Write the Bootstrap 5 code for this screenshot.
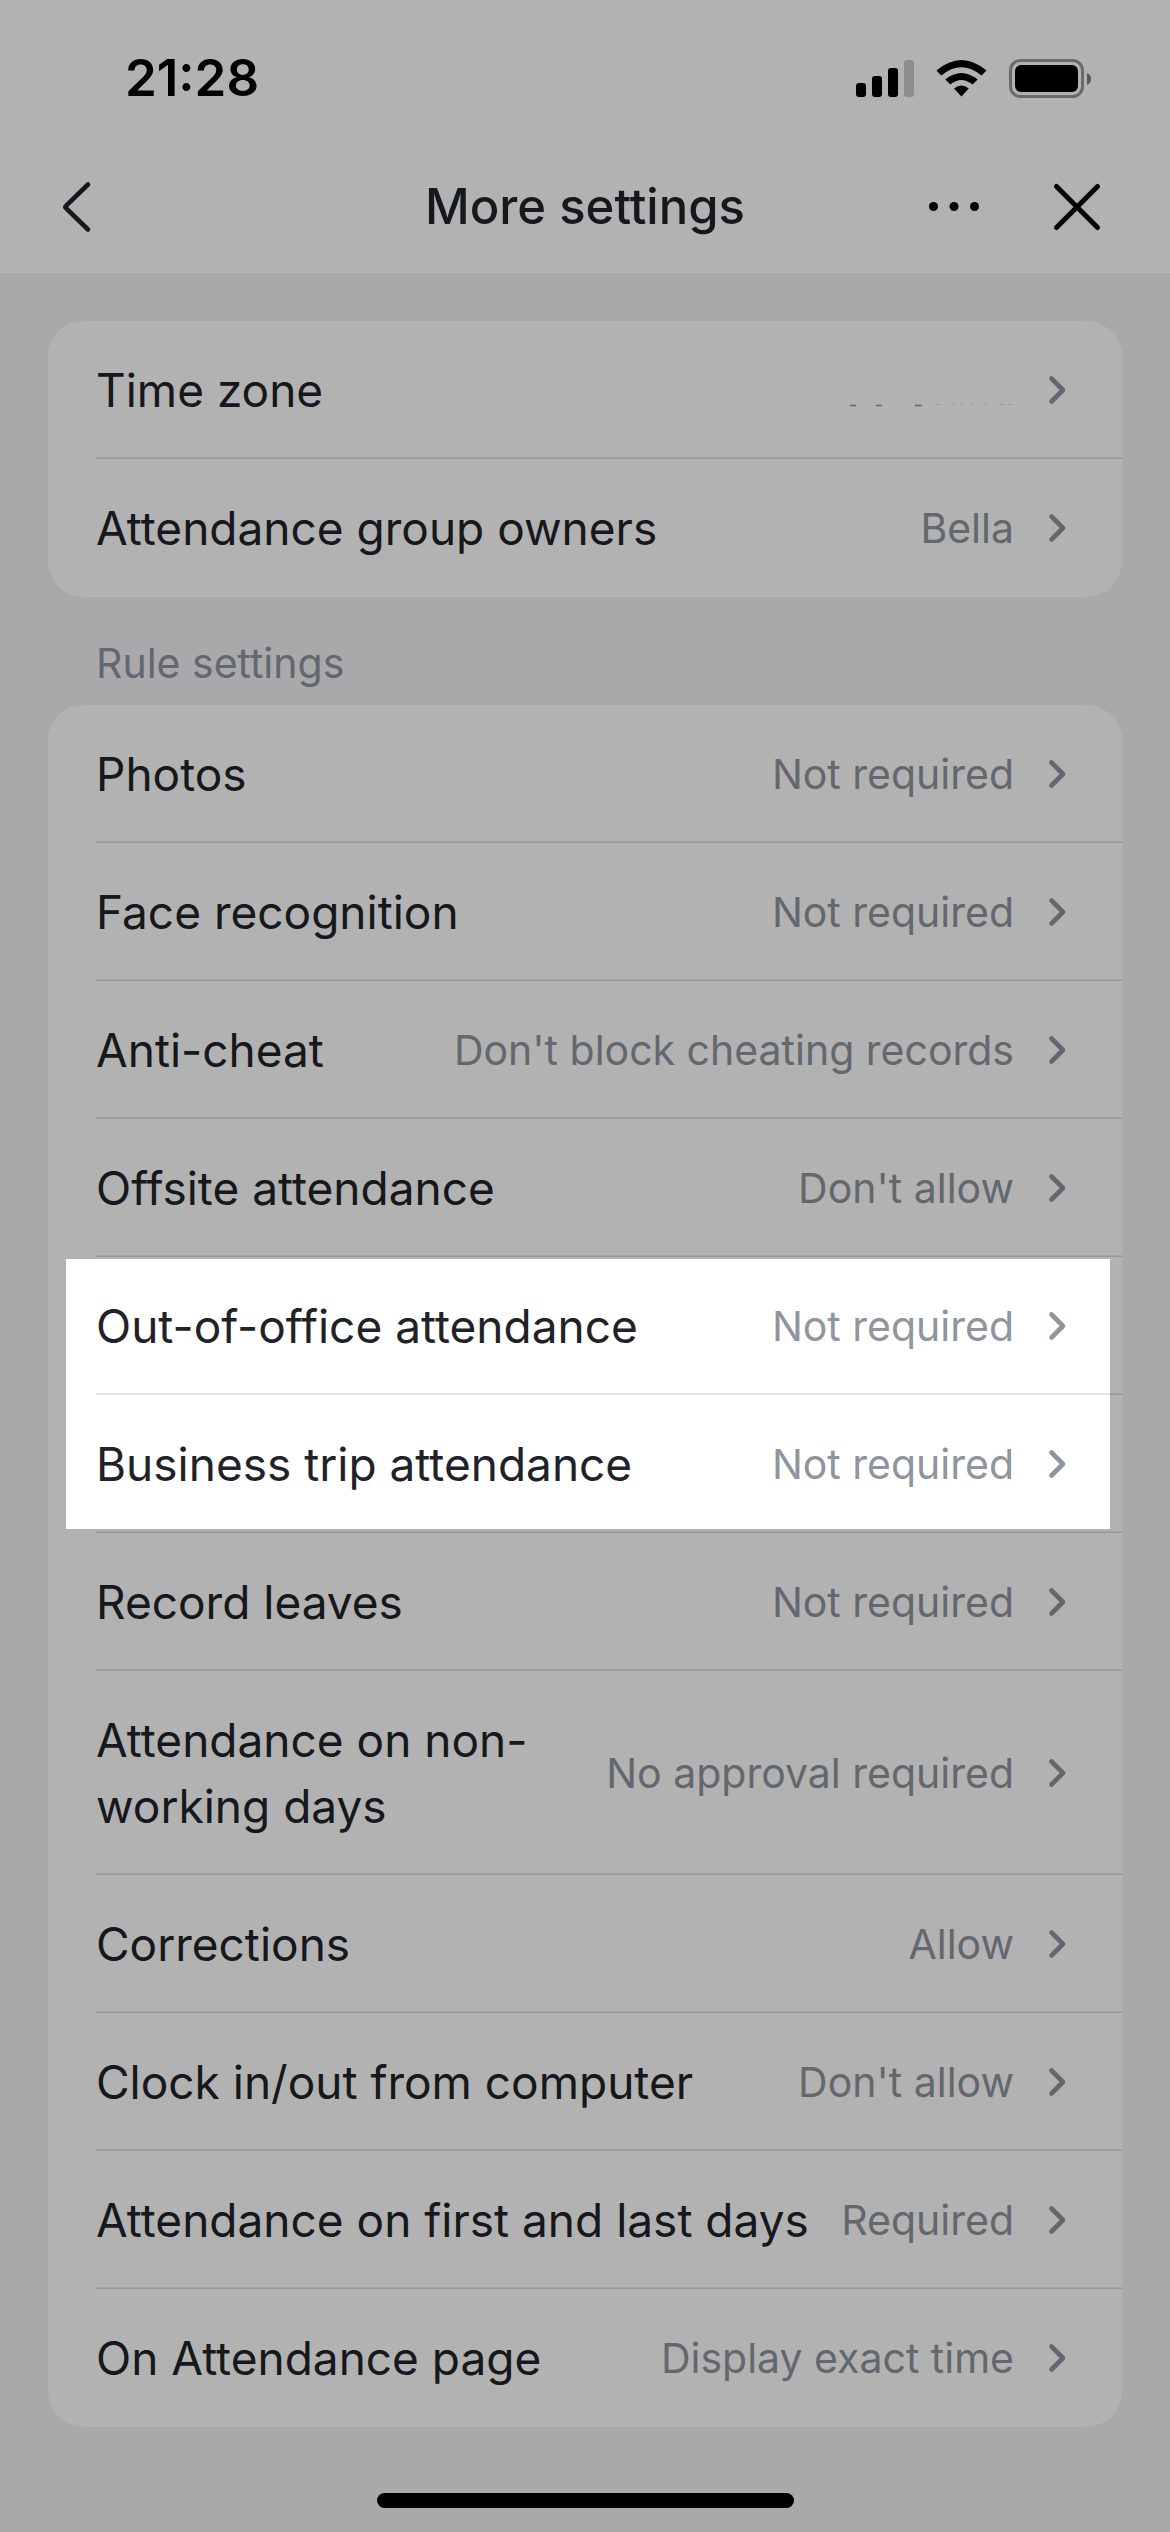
<!DOCTYPE html>
<html lang="en">
<head>
<meta charset="utf-8">
<meta name="viewport" content="width=device-width, initial-scale=1">
<title>More settings</title>
<link rel="stylesheet" href="https://cdn.jsdelivr.net/npm/bootstrap@5.3.0/dist/css/bootstrap.min.css">
<style>
  body { font-family: Inter, "Liberation Sans", sans-serif; background: #f2f3f5; color: #1f2329; overflow-x: hidden; }
  .status-bar { padding: 45px 78px 0 125px; }
  .clock { font-size: 51px; line-height: 66px; font-weight: 600; color: #000; }
  .nav-row { display: grid; grid-template-columns: 1fr auto 1fr; padding: 54px 48px 24px; }
  .nav-title { font-size: 49px; line-height: 84px; font-weight: 500; }
  .icon-btn { border: 0; background: none; padding: 0; color: #000; line-height: 0; }
  .nav-actions { gap: 54px; }
  .settings { padding: 48px 48px 66px; }
  .group-card { background: #fff; border-radius: 36px; padding-left: 48px; }
  .group-title { font-size: 41px; line-height: 60px; font-weight: 400; color: #8f959e; padding: 36px 48px 12px; }
  .setting { padding: 36px 48px 35px 0; border-bottom: 1px solid #dadada; box-shadow: inset 0 -1px #ebebeb; gap: 24px; color: inherit; }
  .setting.final { padding-bottom: 36px; border-bottom: 0; box-shadow: none; }
  .setting-name { font-size: 46px; line-height: 66px; }
  .setting-value { font-size: 41px; line-height: 60px; color: #8f959e; }
  .two-line { max-width: 460px; }
  .chevron { width: 36px; height: 36px; }
  .spotlight::after { content: ""; position: absolute; inset: 2px 12px 4px -30px; box-shadow: 0 0 0 4000px rgba(0,0,0,.3); pointer-events: none; z-index: 10; }
  .home-bar { width: 417px; height: 15px; border-radius: 8px; background: #000; margin-bottom: 24px; }
</style>
</head>
<body>
<svg class="d-none"><symbol id="chev" viewBox="0 0 36 36"><path d="M13.5 6.5L25 18L13.5 29.500" fill="none" stroke="#8f959e" stroke-width="4.600" stroke-linecap="round" stroke-linejoin="round"/></symbol></svg>
<header class="bg-white">
  <div class="status-bar d-flex justify-content-between align-items-center">
    <div class="clock">21:28</div>
    <svg width="236" height="40" viewBox="0 0 236 40" role="img" aria-label="Signal, Wi-Fi and battery">
      <rect x="0" y="25" width="10" height="14" rx="3"/><rect x="16" y="18" width="10" height="21" rx="3"/><rect x="32" y="10" width="10" height="29" rx="3"/><rect x="48" y="2" width="10" height="37" rx="3" fill-opacity=".2"/>
      <path d="M80.500 12.500Q105.300 -8.500 130.500 12.500L125.500 17.500Q105.300 1 85.300 17.500Z"/>
      <path d="M89.300 21.500Q105.300 8.500 121.700 21.500L116.500 26.500Q105.300 17.500 94.300 26.500Z"/>
      <path d="M98 30.500Q105.300 24.500 112.800 30.500L105.400 38.500Z"/>
      <rect x="154.500" y="2.500" width="72" height="36" rx="10" fill="none" stroke="#000" stroke-opacity=".4" stroke-width="3"/>
      <rect x="159" y="7" width="63" height="27" rx="6"/>
      <path d="M231 15q4 1.500 4 6t-4 6z" fill-opacity=".5"/>
    </svg>
  </div>
  <nav class="nav-row align-items-center" aria-label="Page">
    <button class="icon-btn text-start" type="button" aria-label="Back"><svg width="54" height="54" viewBox="0 0 54 54"><path d="M40 4.500L18 25.800Q16.800 27 18 28.200L40 49.500" fill="none" stroke="#1f2329" stroke-width="4.600" stroke-linecap="round" stroke-linejoin="round"/></svg></button>
    <h1 class="nav-title m-0">More settings</h1>
    <div class="nav-actions d-flex justify-content-end">
      <button class="icon-btn" type="button" aria-label="More"><svg width="60" height="54" viewBox="0 0 60 54"><circle cx="9.500" cy="26.500" r="4.500"/><circle cx="30" cy="26.500" r="4.500"/><circle cx="50.500" cy="26.500" r="4.500"/></svg></button>
      <button class="icon-btn" type="button" aria-label="Close"><svg width="84" height="54" viewBox="0 0 84 54"><path d="M18.500 6.500l41 41m0-41l-41 41" fill="none" stroke="#000" stroke-width="5" stroke-linecap="round"/></svg></button>
    </div>
  </nav>
</header>
<main class="settings">
  <section class="group-card">
    <a href="#" class="setting d-flex align-items-center text-decoration-none"><span class="setting-name me-auto">Time zone</span><svg width="174" height="36" viewBox="0 0 174 36" fill="none" stroke="#8f959e" aria-hidden="true"><path d="M10 33.500h6m20 0h6m33 0h7" stroke-width="1.500"/><path d="M96 32.500h4m11 0h3m7 0h3m7 0h3m11 0h3m11 0h6m3 0h4" stroke-opacity=".3"/></svg><svg class="chevron flex-shrink-0"><use href="#chev"/></svg></a>
    <a href="#" class="setting final d-flex align-items-center text-decoration-none"><span class="setting-name me-auto">Attendance group owners</span><span class="setting-value">Bella</span><svg class="chevron flex-shrink-0"><use href="#chev"/></svg></a>
  </section>
  <h2 class="group-title m-0">Rule settings</h2>
  <section class="group-card">
    <a href="#" class="setting d-flex align-items-center text-decoration-none"><span class="setting-name me-auto">Photos</span><span class="setting-value">Not required</span><svg class="chevron flex-shrink-0"><use href="#chev"/></svg></a>
    <a href="#" class="setting d-flex align-items-center text-decoration-none"><span class="setting-name me-auto">Face recognition</span><span class="setting-value">Not required</span><svg class="chevron flex-shrink-0"><use href="#chev"/></svg></a>
    <a href="#" class="setting d-flex align-items-center text-decoration-none"><span class="setting-name me-auto">Anti-cheat</span><span class="setting-value">Don't block cheating records</span><svg class="chevron flex-shrink-0"><use href="#chev"/></svg></a>
    <a href="#" class="setting d-flex align-items-center text-decoration-none"><span class="setting-name me-auto">Offsite attendance</span><span class="setting-value">Don't allow</span><svg class="chevron flex-shrink-0"><use href="#chev"/></svg></a>
    <div class="spotlight position-relative">
      <a href="#" class="setting d-flex align-items-center text-decoration-none"><span class="setting-name me-auto">Out-of-office attendance</span><span class="setting-value">Not required</span><svg class="chevron flex-shrink-0"><use href="#chev"/></svg></a>
      <a href="#" class="setting d-flex align-items-center text-decoration-none"><span class="setting-name me-auto">Business trip attendance</span><span class="setting-value">Not required</span><svg class="chevron flex-shrink-0"><use href="#chev"/></svg></a>
    </div>
    <a href="#" class="setting d-flex align-items-center text-decoration-none"><span class="setting-name me-auto">Record leaves</span><span class="setting-value">Not required</span><svg class="chevron flex-shrink-0"><use href="#chev"/></svg></a>
    <a href="#" class="setting d-flex align-items-center text-decoration-none"><span class="setting-name two-line me-auto">Attendance on non-working days</span><span class="setting-value">No approval required</span><svg class="chevron flex-shrink-0"><use href="#chev"/></svg></a>
    <a href="#" class="setting d-flex align-items-center text-decoration-none"><span class="setting-name me-auto">Corrections</span><span class="setting-value">Allow</span><svg class="chevron flex-shrink-0"><use href="#chev"/></svg></a>
    <a href="#" class="setting d-flex align-items-center text-decoration-none"><span class="setting-name me-auto">Clock in/out from computer</span><span class="setting-value">Don't allow</span><svg class="chevron flex-shrink-0"><use href="#chev"/></svg></a>
    <a href="#" class="setting d-flex align-items-center text-decoration-none"><span class="setting-name me-auto">Attendance on first and last days</span><span class="setting-value">Required</span><svg class="chevron flex-shrink-0"><use href="#chev"/></svg></a>
    <a href="#" class="setting final d-flex align-items-center text-decoration-none"><span class="setting-name me-auto">On Attendance page</span><span class="setting-value">Display exact time</span><svg class="chevron flex-shrink-0"><use href="#chev"/></svg></a>
  </section>
</main>
<footer class="d-flex justify-content-center"><div class="home-bar"></div></footer>
<script src="https://cdn.jsdelivr.net/npm/bootstrap@5.3.0/dist/js/bootstrap.bundle.min.js"></script>
</body>
</html>
